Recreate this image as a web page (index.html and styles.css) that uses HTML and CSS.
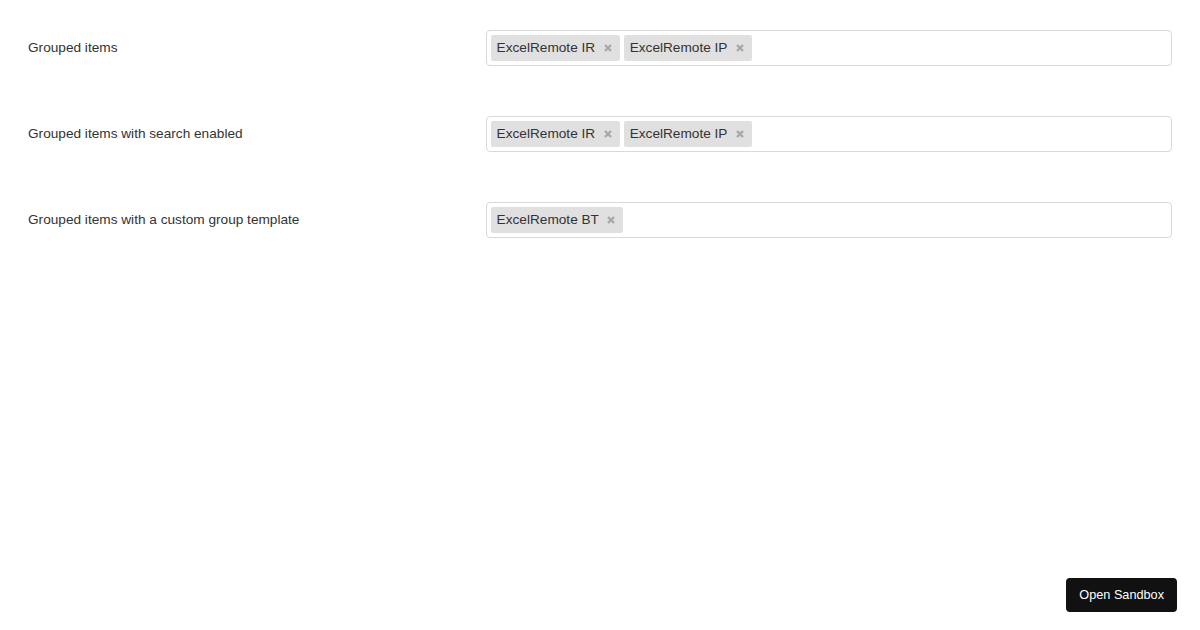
FILE: index.html
```html
<!DOCTYPE html>
<html>
<head>
<meta charset="utf-8">
<link rel="stylesheet" href="styles.css">
</head>
<body>
<div class="form">
  <div class="row">
    <label class="label">Grouped items</label>
    <div class="select">
      <span class="chip"><span class="chip-text">ExcelRemote IR</span><svg class="chip-x" viewBox="0 0 8 8"><path d="M1 1L7 7M7 1L1 7"/></svg></span>
      <span class="chip"><span class="chip-text">ExcelRemote IP</span><svg class="chip-x" viewBox="0 0 8 8"><path d="M1 1L7 7M7 1L1 7"/></svg></span>
    </div>
  </div>
  <div class="row">
    <label class="label">Grouped items with search enabled</label>
    <div class="select">
      <span class="chip"><span class="chip-text">ExcelRemote IR</span><svg class="chip-x" viewBox="0 0 8 8"><path d="M1 1L7 7M7 1L1 7"/></svg></span>
      <span class="chip"><span class="chip-text">ExcelRemote IP</span><svg class="chip-x" viewBox="0 0 8 8"><path d="M1 1L7 7M7 1L1 7"/></svg></span>
    </div>
  </div>
  <div class="row">
    <label class="label">Grouped items with a custom group template</label>
    <div class="select">
      <span class="chip"><span class="chip-text">ExcelRemote BT</span><svg class="chip-x" viewBox="0 0 8 8"><path d="M1 1L7 7M7 1L1 7"/></svg></span>
    </div>
  </div>
</div>
<button class="sandbox">Open Sandbox</button>
</body>
</html>
```
FILE: styles.css
```css
html, body {
  margin: 0;
  padding: 0;
  background: #fff;
  font-family: "Liberation Sans", Arial, sans-serif;
  color: #333;
}
.form {
  padding: 30px 28px;
  display: flex;
  flex-direction: column;
  gap: 50px;
}
.row {
  display: grid;
  grid-template-columns: 2fr 3fr;
  align-items: center;
}
.label {
  font-size: 13.65px;
  color: #333;
  margin-top: -2px;
}
.select {
  box-sizing: border-box;
  height: 36px;
  border: 1px solid #d9d9d9;
  border-radius: 4px;
  padding: 4px;
  display: flex;
  align-items: center;
  gap: 4px;
}
.chip {
  height: 26px;
  display: inline-flex;
  align-items: center;
  background: #e0e0e0;
  border-radius: 2px;
  padding: 0 8px 0 6px;
  font-size: 13.65px;
  color: #333;
}
.chip-text {
  margin-top: -2px;
}
.chip-x {
  margin-left: 8.5px;
  width: 8px;
  height: 8px;
  stroke: #a8a8a8;
  stroke-width: 2.4;
  fill: none;
}
.sandbox {
  position: fixed;
  right: 23px;
  bottom: 18px;
  height: 34px;
  padding: 0 13px;
  background: #111;
  color: #fff;
  border: none;
  border-radius: 4px;
  font-family: "Liberation Sans", Arial, sans-serif;
  font-size: 12.7px;
}
```
